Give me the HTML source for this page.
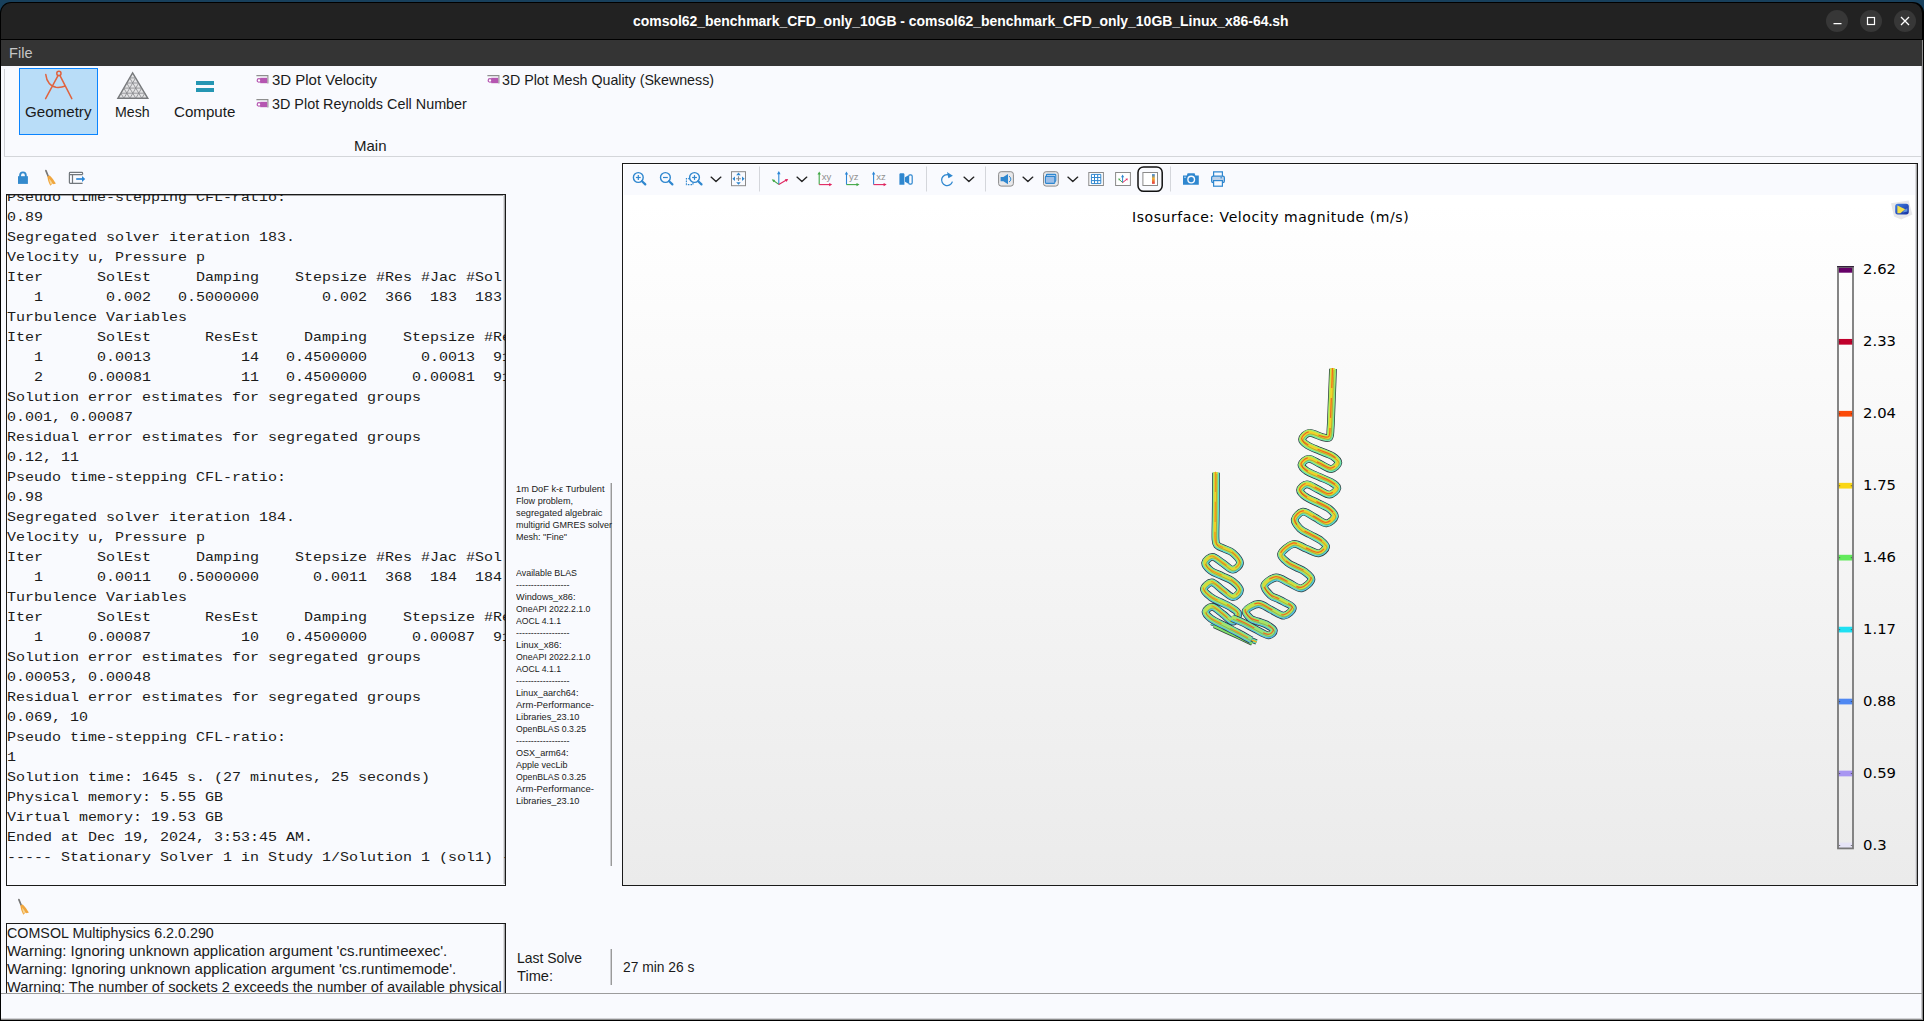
<!DOCTYPE html>
<html lang="en"><head><meta charset="utf-8"><title>comsol62_benchmark_CFD_only_10GB</title>
<style>
html,body{margin:0;padding:0}
body{width:1924px;height:1021px;overflow:hidden;background:#18405c;position:relative;font-family:"Liberation Sans",sans-serif}
.abs{position:absolute}
.t{position:absolute;white-space:pre;transform-origin:0 0;line-height:normal}
#win{position:absolute;left:0;top:2px;width:1924px;height:1019px;background:#000;border-radius:11px 11px 0 0;overflow:hidden}
#titlebar{position:absolute;left:1px;top:1px;width:1921px;height:36px;background:#222222;border-radius:10px 10px 0 0}
#menubar{position:absolute;left:1px;top:38px;width:1921px;height:26px;background:#343434}
#app{position:absolute;left:1px;top:64px;width:1920px;height:952px;background:#f9fafe;border-right:1px solid #c9c9cd;border-bottom:1px solid #d2d2d6}
#win:after{content:'';position:absolute;left:1px;top:38px;width:1921px;height:979px;border-right:1px solid #8c8c8c;border-bottom:1px solid #8c8c8c;pointer-events:none}
.wbtn{position:absolute;top:7px;width:22px;height:22px;border-radius:11px;background:#373737}
#log{position:absolute;left:6px;top:194px;width:498px;height:690px;border:1px solid #1a1a1a;box-sizing:content-box;overflow:hidden;background:#f9fafe}
#log pre{margin:0;position:absolute;left:0px;top:-7.5px;font-family:"Liberation Mono",monospace;font-size:12.8px;transform:scaleX(1.1717);transform-origin:0 0;line-height:20px;color:#1a1a1a;white-space:pre}
#log2{position:absolute;left:6px;top:923px;width:498px;height:69px;border:1px solid #1a1a1a;border-bottom:none;overflow:hidden;background:#f9fafe}
.vline{position:absolute;width:2px;background:linear-gradient(90deg,#cdced2 0,#cdced2 50%,#9a9a9a 50%,#9a9a9a 100%)}
.hline{position:absolute;height:1px;background:#d4d6da}
#gfx{position:absolute;left:622px;top:163px;width:1294px;height:721px;border:1px solid #1a1a1a;background:linear-gradient(#ffffff 0px,#ffffff 40px,#ebebeb 100%)}
#gtb{position:absolute;left:1px;top:1px;width:1291px;height:30px;background:#f9fafe}
.sep{position:absolute;top:4px;width:1px;height:25px;background:#d9dbe0}
</style></head><body>
<div id="win">
<div id="titlebar">
 <div class="wbtn" style="left:1825px"><svg width="22" height="22"><path d="M7.5 13.6h8" stroke="#fff" stroke-width="1.2" fill="none"/></svg></div>
 <div class="wbtn" style="left:1859px"><svg width="22" height="22"><rect x="7.5" y="7.5" width="7" height="7" stroke="#fff" stroke-width="1.2" fill="none"/></svg></div>
 <div class="wbtn" style="left:1893px"><svg width="22" height="22"><path d="M7 7l8 8M15 7l-8 8" stroke="#fff" stroke-width="1.3" fill="none"/></svg></div>
</div>
<div id="menubar"></div>
<div id="app"></div>
</div>

<div id="page" class="abs" style="left:0;top:0;width:1924px;height:1021px">
<div class="abs" style="left:4px;top:69px;height:88px;width:1px;background:#cfd1d6"></div>
<div class="hline" style="left:4px;top:156px;width:1917px"></div>
<div class="abs" style="left:19px;top:68px;width:77px;height:65px;border:1px solid #0a84ff;background:#b9ddf8"></div>
<svg class="abs" style="left:40px;top:68px" width="40" height="34" viewBox="40 68 40 34" fill="none" stroke="#e0633f" stroke-width="1.5" stroke-linecap="round">
<circle cx="58.9" cy="73.4" r="2.1"/><path d="M58 75.6L45.6 98.6M60 75.6L71.8 98.6M45.8 74.6C46.5 82 51 86.8 56 87.3C60 87.6 63 87 65.2 86"/></svg>
<svg class="abs" style="left:114px;top:70px" width="38" height="32" viewBox="114 70 38 32"><path d="M132.6 72.8L147.8 98.3H117.9Z" fill="#e2e2e4" stroke="#77797c" stroke-width="1.4" stroke-linejoin="miter"/><g stroke="#85878a" stroke-width="0.8" fill="none"><path d="M129.7 77.9H135.6"/><path d="M123.9 98.3L135.6 77.9"/><path d="M123.9 98.3L120.8 93.2"/><path d="M126.7 83.0H138.7"/><path d="M129.9 98.3L138.7 83.0"/><path d="M129.9 98.3L123.8 88.1"/><path d="M123.8 88.1H141.7"/><path d="M135.8 98.3L141.7 88.1"/><path d="M135.8 98.3L126.7 83.0"/><path d="M120.8 93.2H144.8"/><path d="M141.8 98.3L144.8 93.2"/><path d="M141.8 98.3L129.7 77.9"/></g></svg>
<div class="abs" style="left:196px;top:81px;width:18px;height:4px;background:#2596b3"></div><div class="abs" style="left:196px;top:88px;width:18px;height:4px;background:#2596b3"></div>
<svg class="abs" style="left:256px;top:75px" width="13" height="10" viewBox="0 0 13 10"><path d="M0.4 0.6H11.9V8.6" stroke="#8e8e8e" stroke-width="1.1" fill="none"/><path d="M4.2 2.8H11.2V8.2H4.2Z" fill="#b556b1"/><circle cx="3" cy="5.4" r="1.8" fill="#fff" stroke="#b556b1" stroke-width="1.2"/></svg>
<svg class="abs" style="left:256px;top:99px" width="13" height="10" viewBox="0 0 13 10"><path d="M0.4 0.6H11.9V8.6" stroke="#8e8e8e" stroke-width="1.1" fill="none"/><path d="M4.2 2.8H11.2V8.2H4.2Z" fill="#b556b1"/><circle cx="3" cy="5.4" r="1.8" fill="#fff" stroke="#b556b1" stroke-width="1.2"/></svg>
<svg class="abs" style="left:487px;top:75px" width="13" height="10" viewBox="0 0 13 10"><path d="M0.4 0.6H11.9V8.6" stroke="#8e8e8e" stroke-width="1.1" fill="none"/><path d="M4.2 2.8H11.2V8.2H4.2Z" fill="#b556b1"/><circle cx="3" cy="5.4" r="1.8" fill="#fff" stroke="#b556b1" stroke-width="1.2"/></svg>
<svg class="abs" style="left:14px;top:168px" width="18" height="20" viewBox="14 168 18 20"><path d="M20.1 177V175.2a2.85 2.85 0 0 1 5.7 0V177" fill="none" stroke="#348acd" stroke-width="1.9"/><rect x="18" y="176.2" width="9.9" height="7.7" fill="#348acd"/></svg>
<svg class="abs" style="left:42px;top:168px" width="18" height="20" viewBox="42 168 18 20"><path d="M45.9 170.6L48.2 176.2" stroke="#777" stroke-width="1.7" stroke-linecap="round"/><path d="M47.3 176.2L49.8 175.4C52.4 178 54.4 181 55.9 183.6L53.6 184.2L52.6 183.4L50.3 185.8C49.2 183.6 48.3 181.4 47.9 179.6Z" fill="#f0a63e"/><path d="M49 178.4C50.6 180 51.8 181.8 52.4 183.2L50.6 184.6C49.8 182.6 49.2 180.4 49 178.4Z" fill="#f8d694"/></svg>
<svg class="abs" style="left:66px;top:168px" width="22" height="20" viewBox="66 168 22 20" fill="none"><path d="M82.6 174.6V173.2Q82.6 172.4 81.8 172.4H70.2Q69.4 172.4 69.4 173.2V182.6Q69.4 183.4 70.2 183.4H82.6" stroke="#72777c" stroke-width="1.2"/><path d="M69.4 174.7H82.6M72.5 174.7V183.4" stroke="#72777c" stroke-width="1.2"/><path d="M76.2 179H82.6" stroke="#2b86d6" stroke-width="1.7"/><path d="M82 176.1L85.2 179L82 181.9Z" fill="#2b86d6"/></svg>
<svg class="abs" style="left:15px;top:897px" width="18" height="20" viewBox="42 168 18 20"><path d="M45.9 170.6L48.2 176.2" stroke="#777" stroke-width="1.7" stroke-linecap="round"/><path d="M47.3 176.2L49.8 175.4C52.4 178 54.4 181 55.9 183.6L53.6 184.2L52.6 183.4L50.3 185.8C49.2 183.6 48.3 181.4 47.9 179.6Z" fill="#f0a63e"/><path d="M49 178.4C50.6 180 51.8 181.8 52.4 183.2L50.6 184.6C49.8 182.6 49.2 180.4 49 178.4Z" fill="#f8d694"/></svg>
<div id="log"><div class="abs" style="left:0;top:0;width:498px;height:1px;background:#a0a0a2"></div><div class="abs" style="left:496px;top:0;width:2px;height:689px;background:linear-gradient(90deg,#dcdce0 0,#dcdce0 50%,#a6a6a8 50%,#a6a6a8 100%)"></div><pre>Pseudo time-stepping CFL-ratio:
0.89
Segregated solver iteration 183.
Velocity u, Pressure p
Iter      SolEst     Damping    Stepsize #Res #Jac #Sol
   1       0.002   0.5000000       0.002  366  183  183
Turbulence Variables
Iter      SolEst      ResEst     Damping    Stepsize #Res #Jac #Sol
   1      0.0013          14   0.4500000      0.0013  919  183  183
   2     0.00081          11   0.4500000     0.00081  910  183  183
Solution error estimates for segregated groups
0.001, 0.00087
Residual error estimates for segregated groups
0.12, 11
Pseudo time-stepping CFL-ratio:
0.98
Segregated solver iteration 184.
Velocity u, Pressure p
Iter      SolEst     Damping    Stepsize #Res #Jac #Sol
   1      0.0011   0.5000000      0.0011  368  184  184
Turbulence Variables
Iter      SolEst      ResEst     Damping    Stepsize #Res #Jac #Sol
   1     0.00087          10   0.4500000     0.00087  911  184  184
Solution error estimates for segregated groups
0.00053, 0.00048
Residual error estimates for segregated groups
0.069, 10
Pseudo time-stepping CFL-ratio:
1
Solution time: 1645 s. (27 minutes, 25 seconds)
Physical memory: 5.55 GB
Virtual memory: 19.53 GB
Ended at Dec 19, 2024, 3:53:45 AM.
----- Stationary Solver 1 in Study 1/Solution 1 (sol1) ------------------------</pre></div>
<div id="log2"></div>
<div class="abs" style="left:503px;top:924px;width:2px;height:69px;background:linear-gradient(90deg,#dcdce0 0,#dcdce0 50%,#a6a6a8 50%,#a6a6a8 100%)"></div>
<div class="vline" style="left:610px;top:483px;height:383px"></div>
<div class="vline" style="left:610px;top:949px;height:36px"></div>
<div id="gfx"><div id="gtb"></div></div>
<div class="abs" style="left:1915px;top:164px;width:2px;height:720px;background:linear-gradient(90deg,#dcdce0 0,#dcdce0 50%,#a6a6a8 50%,#a6a6a8 100%)"></div>
<svg class="abs" style="left:620px;top:160px" width="620" height="40" viewBox="620 160 620 40" fill="none">
<circle cx="638.3" cy="177.5" r="4.9" stroke="#2f87cf" stroke-width="1.4"/><path d="M642.0 181.2L645.3 184.4" stroke="#2f87cf" stroke-width="2.2" stroke-linecap="round"/>
<path d="M635.9 177.5H640.6999999999999" stroke="#2f87cf" stroke-width="1.2"/>
<path d="M638.3 175.1V179.9" stroke="#2f87cf" stroke-width="1.2"/>
<circle cx="665.4" cy="177.5" r="4.9" stroke="#2f87cf" stroke-width="1.4"/><path d="M669.1 181.2L672.4 184.4" stroke="#2f87cf" stroke-width="2.2" stroke-linecap="round"/>
<path d="M663.0 177.5H667.8" stroke="#2f87cf" stroke-width="1.2"/>
<circle cx="694.5" cy="177.5" r="4.9" stroke="#2f87cf" stroke-width="1.4"/><path d="M698.2 181.2L701.5 184.4" stroke="#2f87cf" stroke-width="2.2" stroke-linecap="round"/>
<path d="M692.1 177.5H696.9" stroke="#2f87cf" stroke-width="1.2"/>
<path d="M694.5 175.1V179.9" stroke="#2f87cf" stroke-width="1.2"/>
<path d="M689.8 178.6H686.4V184.6H693V182.6" stroke="#2f87cf" stroke-width="1.1" stroke-dasharray="1.6 1.1"/>
<path d="M711.1 177.1L716 181.6L720.9 177.1" stroke="#222" stroke-width="1.35" stroke-linecap="round" stroke-linejoin="round"/>
<rect x="731.5" y="171.7" width="14" height="14" stroke="#8a8a8a" stroke-width="1"/>
<path d="M738.5 176.3V181.1M736.1 178.7H740.9" stroke="#8a8a8a" stroke-width="1.1"/>
<path d="M738.5 172.6L740.8 175.2H736.2ZM738.5 184.8L740.8 182.2H736.2ZM732.4 178.7L735 176.4V181ZM744.6 178.7L742 176.4V181Z" fill="#2f87cf"/>
<path d="M759.5 166.5V191.5" stroke="#d4d6db" stroke-width="1"/>
<path d="M778.8 184.4V172.4" stroke="#2b86d6" stroke-width="1.1"/><path d="M778.8 171L780.6 174.2H777Z" fill="#2b86d6"/>
<path d="M778.8 184.4L773 180.2" stroke="#42a847" stroke-width="1.1"/><path d="M771.8 179.3L775.2 180L773.4 182.2Z" fill="#42a847"/>
<path d="M778.8 184.4L786.8 179.8" stroke="#e0245e" stroke-width="1.1"/><path d="M788.2 179L786.6 182L784.8 179.2Z" fill="#e0245e"/>
<path d="M797.0 177.1L801.9 181.6L806.8 177.1" stroke="#222" stroke-width="1.35" stroke-linecap="round" stroke-linejoin="round"/>
<path d="M819.2 184.6V173" stroke="#42a847" stroke-width="1.1"/><path d="M819.2 171.4L820.9000000000001 174.4H817.5Z" fill="#42a847"/>
<path d="M819.2 184.6H830.6" stroke="#e0245e" stroke-width="1.1"/><path d="M832.2 184.6L829.2 186.3V182.9Z" fill="#e0245e"/>
<text x="821.8000000000001" y="180.4" font-family="'Liberation Sans',sans-serif" font-size="9.5" fill="#8f8f8f">xy</text>
<path d="M846.5 184.6V173" stroke="#2b86d6" stroke-width="1.1"/><path d="M846.5 171.4L848.2 174.4H844.8Z" fill="#2b86d6"/>
<path d="M846.5 184.6H857.9" stroke="#42a847" stroke-width="1.1"/><path d="M859.5 184.6L856.5 186.3V182.9Z" fill="#42a847"/>
<text x="849.1" y="180.4" font-family="'Liberation Sans',sans-serif" font-size="9.5" fill="#8f8f8f">yz</text>
<path d="M873.6 184.6V173" stroke="#2b86d6" stroke-width="1.1"/><path d="M873.6 171.4L875.3000000000001 174.4H871.9Z" fill="#2b86d6"/>
<path d="M873.6 184.6H885.0" stroke="#e0245e" stroke-width="1.1"/><path d="M886.6 184.6L883.6 186.3V182.9Z" fill="#e0245e"/>
<text x="876.2" y="180.4" font-family="'Liberation Sans',sans-serif" font-size="9.5" fill="#8f8f8f">xz</text>
<path d="M899.4 174.6C899.4 173.6 900 173.2 900.8 173.2H903C903.8 173.2 904.4 173.6 904.4 174.6V184.8H899.4Z" fill="#2f87cf"/>
<path d="M905 177.2L908 175.6V183.4L905 181.8Z" fill="#2f87cf"/><rect x="908.6" y="174.8" width="3.6" height="9.4" rx="1.4" stroke="#2f87cf" stroke-width="1.2"/>
<path d="M926.5 166.5V191.5" stroke="#d4d6db" stroke-width="1"/>
<path d="M949 174.9A5.5 5.5 0 1 0 952.4 181.6" stroke="#2f87cf" stroke-width="1.3"/><path d="M947 171.9L952.9 175.7L948.4 178.2Z" fill="#2f87cf"/>
<path d="M964.0 177.1L968.9 181.6L973.8 177.1" stroke="#222" stroke-width="1.35" stroke-linecap="round" stroke-linejoin="round"/>
<path d="M985.5 166.5V191.5" stroke="#d4d6db" stroke-width="1"/>
<rect x="998.6" y="171.7" width="14.8" height="14.4" rx="2.6" fill="#e8e8ea" stroke="#8a8a8a" stroke-width="1"/>
<path d="M1000.6 177H1003.4L1008 174V184.2L1003.4 181.2H1000.6Z" fill="#2f87cf"/><path d="M1009 176.2A3.2 3.2 0 0 1 1009 182" stroke="#2f87cf" stroke-width="1"/>
<path d="M1023.0000000000001 177.1L1027.9 181.6L1032.8000000000002 177.1" stroke="#222" stroke-width="1.35" stroke-linecap="round" stroke-linejoin="round"/>
<rect x="1043.5" y="171.7" width="14.8" height="14.4" rx="2.6" fill="#e8e8ea" stroke="#8a8a8a" stroke-width="1"/>
<rect x="1046.4" y="174.4" width="9.4" height="7" rx="0.8" stroke="#2f87cf" stroke-width="1.1" fill="#cfe0f5"/><rect x="1045.4" y="176.4" width="9.4" height="7" rx="0.8" stroke="#2f87cf" stroke-width="1.1" fill="#9dbfe8"/>
<path d="M1067.8999999999999 177.1L1072.8 181.6L1077.7 177.1" stroke="#222" stroke-width="1.35" stroke-linecap="round" stroke-linejoin="round"/>
<rect x="1088.8" y="172.5" width="14.6" height="13" stroke="#8a8a8a" stroke-width="1" fill="#fff"/>
<path d="M1091.4 174.4H1100.8V183.6H1091.4ZM1094.5 174.4V183.6M1097.7 174.4V183.6M1091.4 177.5H1100.8M1091.4 180.6H1100.8" stroke="#2f87cf" stroke-width="1"/>
<rect x="1115.6" y="172.5" width="14.8" height="13" stroke="#8a8a8a" stroke-width="1" fill="#fff"/>
<path d="M1122.6 182.6V176.4" stroke="#2f87cf" stroke-width="1"/><path d="M1122.6 174.6L1124.2 177.2H1121Z" fill="#2f87cf"/><path d="M1122.6 182.6L1119.2 179.4" stroke="#42a847" stroke-width="1"/><path d="M1118.2 178.4L1120.6 178.8L1119 180.8Z" fill="#42a847"/><path d="M1122.6 182.6L1126.6 179.4" stroke="#e0245e" stroke-width="1"/><path d="M1127.8 178.4L1127.2 180.8L1125.4 178.8Z" fill="#e0245e"/>
<rect x="1138" y="166.9" width="24.2" height="24.4" rx="5.6" stroke="#111" stroke-width="1.5" fill="#f9fafe"/>
<rect x="1142.9" y="172.5" width="14.6" height="13" stroke="#8a8a8a" stroke-width="1" fill="#fff"/>
<defs><linearGradient id="lg" x1="0" y1="0" x2="0" y2="1"><stop offset="0" stop-color="#2b7fd6"/><stop offset=".45" stop-color="#f2b035"/><stop offset="1" stop-color="#e2343f"/></linearGradient></defs>
<rect x="1152" y="174.2" width="2.8" height="9.6" fill="url(#lg)"/>
<path d="M1170.5 166.5V191.5" stroke="#d4d6db" stroke-width="1"/>
<path d="M1183 175.4H1186.8L1187.6 173.2H1194.6L1195.4 175.4H1198.8V184.8H1183Z" fill="#2f87cf"/><circle cx="1191.2" cy="179.6" r="3.3" fill="#2f87cf" stroke="#f9fafe" stroke-width="1.4"/><circle cx="1185" cy="177.2" r=".7" fill="#f9fafe"/>
<path d="M1213.6 176.4V171.8H1222.4V176.4" stroke="#2f87cf" stroke-width="1.2"/><rect x="1211.6" y="176.2" width="12.8" height="6.4" rx="1.6" fill="#bdd2ea" stroke="#2f87cf" stroke-width="1.2"/><rect x="1213.6" y="180.6" width="8.8" height="5.6" fill="#f9fafe" stroke="#2f87cf" stroke-width="1.2"/><path d="M1220.4 177.8H1222" stroke="#2f87cf" stroke-width="1"/>
</svg>
<svg class="abs" style="left:1180px;top:355px" width="180" height="300" viewBox="1180 355 180 300" fill="none" stroke-linecap="butt" stroke-linejoin="round">
<defs><linearGradient id="sg" gradientUnits="userSpaceOnUse" x1="0" y1="370" x2="0" y2="645"><stop offset="0" stop-color="#8fe672"/><stop offset=".45" stop-color="#5fe2cc"/><stop offset="1" stop-color="#52b6ea"/></linearGradient><linearGradient id="yg" gradientUnits="userSpaceOnUse" x1="0" y1="370" x2="0" y2="645"><stop offset="0" stop-color="#f4d428"/><stop offset=".6" stop-color="#f2cc26"/><stop offset=".85" stop-color="#cfe040"/><stop offset="1" stop-color="#86e088"/></linearGradient><linearGradient id="tg" gradientUnits="userSpaceOnUse" x1="0" y1="370" x2="0" y2="645"><stop offset="0" stop-color="#c6ea48"/><stop offset="1" stop-color="#8fe67a"/></linearGradient></defs>
<g id="sp">
<path d="M1211.5,622.6C1215.4,624.3 1227.5,629.8 1235.0,633.0C1242.5,636.2 1252.9,640.5 1256.5,642.0" stroke="#34423f" stroke-width="5.4"/><path d="M1211.5,622.6C1215.4,624.3 1227.5,629.8 1235.0,633.0C1242.5,636.2 1252.9,640.5 1256.5,642.0" stroke="#52dcc0" stroke-width="4"/><path d="M1211.5,622.6C1215.4,624.3 1227.5,629.8 1235.0,633.0C1242.5,636.2 1252.9,640.5 1256.5,642.0" stroke="#f2b21d" stroke-width="1.6"/>
<path d="M1214.0,626.0C1217.7,627.7 1229.7,633.1 1236.0,636.0C1242.3,638.9 1249.3,642.2 1252.0,643.5" stroke="#34423f" stroke-width="4.4"/><path d="M1214.0,626.0C1217.7,627.7 1229.7,633.1 1236.0,636.0C1242.3,638.9 1249.3,642.2 1252.0,643.5" stroke="#7fe06a" stroke-width="3"/>
<path d="M1216.0,472.7C1216.0,476.4 1216.0,487.1 1215.9,495.0C1215.9,502.9 1215.8,512.8 1215.7,520.0C1215.6,527.2 1215.3,533.8 1215.5,538.0C1215.7,542.2 1215.5,543.2 1217.0,545.0C1218.5,546.8 1222.1,547.7 1224.8,549.0C1227.4,550.3 1230.4,550.7 1232.9,553.0C1235.5,555.3 1240.0,560.0 1240.0,562.8C1240.0,565.6 1235.8,569.6 1232.9,569.7C1230.1,569.8 1226.3,565.4 1223.0,563.3C1219.6,561.2 1215.6,557.0 1212.6,556.9C1209.6,556.8 1205.5,560.5 1205.2,562.8C1204.9,565.1 1208.1,568.5 1210.9,570.7C1213.7,572.9 1218.4,574.2 1222.0,576.0C1225.7,577.8 1230.0,579.0 1232.9,581.4C1235.9,583.8 1240.0,587.6 1240.0,590.2C1240.0,592.8 1235.9,597.2 1232.9,597.1C1230.0,597.0 1225.6,592.2 1222.0,589.7C1218.5,587.2 1214.8,582.5 1211.8,582.4C1208.8,582.3 1204.0,586.8 1203.9,589.3C1203.7,591.8 1208.2,595.0 1210.9,597.1C1213.6,599.2 1217.0,600.4 1220.2,602.0C1223.5,603.6 1227.3,604.9 1230.2,606.9C1233.2,608.9 1237.7,611.2 1238.2,613.7C1238.6,616.2 1235.5,621.5 1232.9,621.6C1230.4,621.7 1226.3,616.7 1223.0,614.2C1219.6,611.8 1215.5,607.3 1212.6,606.9C1209.7,606.5 1205.9,609.8 1205.6,611.8C1205.3,613.8 1207.7,616.2 1210.9,618.6C1214.1,621.0 1220.2,623.6 1224.8,626.0C1229.3,628.4 1233.8,630.6 1238.2,633.0C1242.7,635.4 1249.2,639.0 1251.4,640.2" stroke="#2f3b3b" stroke-width="7.8"/><path d="M1216.0,472.7C1216.0,476.4 1216.0,487.1 1215.9,495.0C1215.9,502.9 1215.8,512.8 1215.7,520.0C1215.6,527.2 1215.3,533.8 1215.5,538.0C1215.7,542.2 1215.5,543.2 1217.0,545.0C1218.5,546.8 1222.1,547.7 1224.8,549.0C1227.4,550.3 1230.4,550.7 1232.9,553.0C1235.5,555.3 1240.0,560.0 1240.0,562.8C1240.0,565.6 1235.8,569.6 1232.9,569.7C1230.1,569.8 1226.3,565.4 1223.0,563.3C1219.6,561.2 1215.6,557.0 1212.6,556.9C1209.6,556.8 1205.5,560.5 1205.2,562.8C1204.9,565.1 1208.1,568.5 1210.9,570.7C1213.7,572.9 1218.4,574.2 1222.0,576.0C1225.7,577.8 1230.0,579.0 1232.9,581.4C1235.9,583.8 1240.0,587.6 1240.0,590.2C1240.0,592.8 1235.9,597.2 1232.9,597.1C1230.0,597.0 1225.6,592.2 1222.0,589.7C1218.5,587.2 1214.8,582.5 1211.8,582.4C1208.8,582.3 1204.0,586.8 1203.9,589.3C1203.7,591.8 1208.2,595.0 1210.9,597.1C1213.6,599.2 1217.0,600.4 1220.2,602.0C1223.5,603.6 1227.3,604.9 1230.2,606.9C1233.2,608.9 1237.7,611.2 1238.2,613.7C1238.6,616.2 1235.5,621.5 1232.9,621.6C1230.4,621.7 1226.3,616.7 1223.0,614.2C1219.6,611.8 1215.5,607.3 1212.6,606.9C1209.7,606.5 1205.9,609.8 1205.6,611.8C1205.3,613.8 1207.7,616.2 1210.9,618.6C1214.1,621.0 1220.2,623.6 1224.8,626.0C1229.3,628.4 1233.8,630.6 1238.2,633.0C1242.7,635.4 1249.2,639.0 1251.4,640.2" stroke="url(#sg)" stroke-width="6.4"/><path d="M1216.0,472.7C1216.0,476.4 1216.0,487.1 1215.9,495.0C1215.9,502.9 1215.8,512.8 1215.7,520.0C1215.6,527.2 1215.3,533.8 1215.5,538.0C1215.7,542.2 1215.5,543.2 1217.0,545.0C1218.5,546.8 1222.1,547.7 1224.8,549.0C1227.4,550.3 1230.4,550.7 1232.9,553.0C1235.5,555.3 1240.0,560.0 1240.0,562.8C1240.0,565.6 1235.8,569.6 1232.9,569.7C1230.1,569.8 1226.3,565.4 1223.0,563.3C1219.6,561.2 1215.6,557.0 1212.6,556.9C1209.6,556.8 1205.5,560.5 1205.2,562.8C1204.9,565.1 1208.1,568.5 1210.9,570.7C1213.7,572.9 1218.4,574.2 1222.0,576.0C1225.7,577.8 1230.0,579.0 1232.9,581.4C1235.9,583.8 1240.0,587.6 1240.0,590.2C1240.0,592.8 1235.9,597.2 1232.9,597.1C1230.0,597.0 1225.6,592.2 1222.0,589.7C1218.5,587.2 1214.8,582.5 1211.8,582.4C1208.8,582.3 1204.0,586.8 1203.9,589.3C1203.7,591.8 1208.2,595.0 1210.9,597.1C1213.6,599.2 1217.0,600.4 1220.2,602.0C1223.5,603.6 1227.3,604.9 1230.2,606.9C1233.2,608.9 1237.7,611.2 1238.2,613.7C1238.6,616.2 1235.5,621.5 1232.9,621.6C1230.4,621.7 1226.3,616.7 1223.0,614.2C1219.6,611.8 1215.5,607.3 1212.6,606.9C1209.7,606.5 1205.9,609.8 1205.6,611.8C1205.3,613.8 1207.7,616.2 1210.9,618.6C1214.1,621.0 1220.2,623.6 1224.8,626.0C1229.3,628.4 1233.8,630.6 1238.2,633.0C1242.7,635.4 1249.2,639.0 1251.4,640.2" stroke="url(#tg)" stroke-width="4.8" transform="translate(-0.4,-0.6)"/><path d="M1216.0,472.7C1216.0,476.4 1216.0,487.1 1215.9,495.0C1215.9,502.9 1215.8,512.8 1215.7,520.0C1215.6,527.2 1215.3,533.8 1215.5,538.0C1215.7,542.2 1215.5,543.2 1217.0,545.0C1218.5,546.8 1222.1,547.7 1224.8,549.0C1227.4,550.3 1230.4,550.7 1232.9,553.0C1235.5,555.3 1240.0,560.0 1240.0,562.8C1240.0,565.6 1235.8,569.6 1232.9,569.7C1230.1,569.8 1226.3,565.4 1223.0,563.3C1219.6,561.2 1215.6,557.0 1212.6,556.9C1209.6,556.8 1205.5,560.5 1205.2,562.8C1204.9,565.1 1208.1,568.5 1210.9,570.7C1213.7,572.9 1218.4,574.2 1222.0,576.0C1225.7,577.8 1230.0,579.0 1232.9,581.4C1235.9,583.8 1240.0,587.6 1240.0,590.2C1240.0,592.8 1235.9,597.2 1232.9,597.1C1230.0,597.0 1225.6,592.2 1222.0,589.7C1218.5,587.2 1214.8,582.5 1211.8,582.4C1208.8,582.3 1204.0,586.8 1203.9,589.3C1203.7,591.8 1208.2,595.0 1210.9,597.1C1213.6,599.2 1217.0,600.4 1220.2,602.0C1223.5,603.6 1227.3,604.9 1230.2,606.9C1233.2,608.9 1237.7,611.2 1238.2,613.7C1238.6,616.2 1235.5,621.5 1232.9,621.6C1230.4,621.7 1226.3,616.7 1223.0,614.2C1219.6,611.8 1215.5,607.3 1212.6,606.9C1209.7,606.5 1205.9,609.8 1205.6,611.8C1205.3,613.8 1207.7,616.2 1210.9,618.6C1214.1,621.0 1220.2,623.6 1224.8,626.0C1229.3,628.4 1233.8,630.6 1238.2,633.0C1242.7,635.4 1249.2,639.0 1251.4,640.2" stroke="url(#yg)" stroke-width="2.8" transform="translate(-0.3,-0.5)"/><path d="M1216.0,472.7C1216.0,476.4 1216.0,487.1 1215.9,495.0C1215.9,502.9 1215.8,512.8 1215.7,520.0C1215.6,527.2 1215.3,533.8 1215.5,538.0C1215.7,542.2 1215.5,543.2 1217.0,545.0C1218.5,546.8 1222.1,547.7 1224.8,549.0C1227.4,550.3 1230.4,550.7 1232.9,553.0C1235.5,555.3 1240.0,560.0 1240.0,562.8C1240.0,565.6 1235.8,569.6 1232.9,569.7C1230.1,569.8 1226.3,565.4 1223.0,563.3C1219.6,561.2 1215.6,557.0 1212.6,556.9C1209.6,556.8 1205.5,560.5 1205.2,562.8C1204.9,565.1 1208.1,568.5 1210.9,570.7C1213.7,572.9 1218.4,574.2 1222.0,576.0C1225.7,577.8 1230.0,579.0 1232.9,581.4C1235.9,583.8 1240.0,587.6 1240.0,590.2C1240.0,592.8 1235.9,597.2 1232.9,597.1C1230.0,597.0 1225.6,592.2 1222.0,589.7C1218.5,587.2 1214.8,582.5 1211.8,582.4C1208.8,582.3 1204.0,586.8 1203.9,589.3C1203.7,591.8 1208.2,595.0 1210.9,597.1C1213.6,599.2 1217.0,600.4 1220.2,602.0C1223.5,603.6 1227.3,604.9 1230.2,606.9C1233.2,608.9 1237.7,611.2 1238.2,613.7C1238.6,616.2 1235.5,621.5 1232.9,621.6C1230.4,621.7 1226.3,616.7 1223.0,614.2C1219.6,611.8 1215.5,607.3 1212.6,606.9C1209.7,606.5 1205.9,609.8 1205.6,611.8C1205.3,613.8 1207.7,616.2 1210.9,618.6C1214.1,621.0 1220.2,623.6 1224.8,626.0C1229.3,628.4 1233.8,630.6 1238.2,633.0C1242.7,635.4 1249.2,639.0 1251.4,640.2" stroke="#f0961c" stroke-width="1.2" transform="translate(-0.5,-0.9)" stroke-dasharray="20 10"/><path d="M1216.0,472.7C1216.0,476.4 1216.0,487.1 1215.9,495.0C1215.9,502.9 1215.8,512.8 1215.7,520.0C1215.6,527.2 1215.3,533.8 1215.5,538.0C1215.7,542.2 1215.5,543.2 1217.0,545.0C1218.5,546.8 1222.1,547.7 1224.8,549.0C1227.4,550.3 1230.4,550.7 1232.9,553.0C1235.5,555.3 1240.0,560.0 1240.0,562.8C1240.0,565.6 1235.8,569.6 1232.9,569.7C1230.1,569.8 1226.3,565.4 1223.0,563.3C1219.6,561.2 1215.6,557.0 1212.6,556.9C1209.6,556.8 1205.5,560.5 1205.2,562.8C1204.9,565.1 1208.1,568.5 1210.9,570.7C1213.7,572.9 1218.4,574.2 1222.0,576.0C1225.7,577.8 1230.0,579.0 1232.9,581.4C1235.9,583.8 1240.0,587.6 1240.0,590.2C1240.0,592.8 1235.9,597.2 1232.9,597.1C1230.0,597.0 1225.6,592.2 1222.0,589.7C1218.5,587.2 1214.8,582.5 1211.8,582.4C1208.8,582.3 1204.0,586.8 1203.9,589.3C1203.7,591.8 1208.2,595.0 1210.9,597.1C1213.6,599.2 1217.0,600.4 1220.2,602.0C1223.5,603.6 1227.3,604.9 1230.2,606.9C1233.2,608.9 1237.7,611.2 1238.2,613.7C1238.6,616.2 1235.5,621.5 1232.9,621.6C1230.4,621.7 1226.3,616.7 1223.0,614.2C1219.6,611.8 1215.5,607.3 1212.6,606.9C1209.7,606.5 1205.9,609.8 1205.6,611.8C1205.3,613.8 1207.7,616.2 1210.9,618.6C1214.1,621.0 1220.2,623.6 1224.8,626.0C1229.3,628.4 1233.8,630.6 1238.2,633.0C1242.7,635.4 1249.2,639.0 1251.4,640.2" stroke="#2f3b3b" stroke-width="0.5" opacity=".55" transform="translate(0.9,1.2)"/>
<path d="M1333.0,368.8C1332.9,372.3 1332.5,383.1 1332.2,390.0C1331.9,396.9 1331.7,403.7 1331.4,410.0C1331.1,416.3 1331.0,423.4 1330.6,428.0C1330.2,432.6 1330.6,436.0 1329.2,437.5C1327.8,439.0 1325.3,437.8 1322.0,437.0C1318.7,436.2 1312.6,432.4 1309.3,432.8C1306.0,433.2 1302.3,437.2 1302.1,439.3C1301.9,441.4 1304.9,443.6 1307.9,445.5C1310.9,447.4 1315.8,449.1 1320.0,450.9C1324.2,452.7 1329.8,454.3 1332.8,456.3C1335.8,458.3 1338.5,460.6 1338.3,462.7C1338.1,464.8 1334.5,468.8 1331.4,469.0C1328.4,469.2 1323.8,465.6 1320.0,463.9C1316.2,462.2 1312.0,458.7 1308.9,458.8C1305.8,458.9 1301.8,462.6 1301.5,464.7C1301.2,466.8 1304.1,469.2 1307.0,471.2C1309.9,473.2 1314.9,474.8 1319.0,476.7C1323.1,478.6 1328.4,480.4 1331.4,482.3C1334.5,484.2 1337.6,486.1 1337.3,488.2C1337.0,490.2 1332.7,494.4 1329.5,494.6C1326.3,494.8 1321.8,491.1 1318.0,489.4C1314.2,487.7 1310.0,484.2 1307.0,484.3C1304.0,484.4 1300.3,488.0 1300.1,490.1C1299.9,492.2 1303.0,494.9 1306.0,497.0C1309.0,499.1 1314.1,501.0 1318.0,503.0C1321.9,505.0 1326.7,506.8 1329.5,509.1C1332.3,511.4 1335.3,514.2 1334.8,516.6C1334.3,519.0 1329.8,523.2 1326.5,523.4C1323.2,523.5 1318.9,519.5 1315.0,517.5C1311.1,515.5 1306.5,511.4 1303.1,511.7C1299.7,512.0 1295.3,516.7 1294.8,519.5C1294.3,522.3 1297.6,526.2 1300.1,528.7C1302.6,531.2 1306.6,532.5 1310.0,534.5C1313.4,536.5 1318.0,538.3 1320.7,540.4C1323.4,542.5 1326.4,544.8 1326.1,546.9C1325.8,549.0 1322.0,553.0 1318.7,553.3C1315.4,553.6 1310.2,550.1 1306.0,548.6C1301.8,547.1 1297.5,543.1 1293.3,544.0C1289.1,544.9 1282.0,550.9 1281.1,554.0C1280.2,557.1 1285.4,560.6 1287.9,562.8C1290.4,565.0 1293.2,565.7 1296.0,567.2C1298.8,568.7 1302.0,569.6 1304.6,571.6C1307.2,573.6 1311.9,576.7 1311.4,579.5C1310.9,582.3 1305.3,587.7 1301.6,588.3C1297.9,588.9 1293.2,584.7 1289.0,582.9C1284.8,581.1 1280.3,577.1 1276.2,577.5C1272.1,577.9 1265.4,582.4 1264.4,585.3C1263.4,588.2 1268.2,592.9 1270.3,595.1C1272.4,597.3 1274.7,597.4 1277.0,598.5C1279.3,599.6 1281.4,600.4 1284.0,602.0C1286.6,603.6 1292.8,605.6 1292.8,607.9C1292.8,610.2 1287.6,615.4 1284.0,615.7C1280.4,616.0 1275.2,611.8 1271.0,609.8C1266.8,607.8 1262.7,603.8 1258.5,604.0C1254.3,604.2 1247.1,608.4 1245.8,610.8C1244.5,613.2 1248.7,616.8 1250.7,618.6C1252.7,620.4 1255.4,620.5 1258.0,621.5C1260.6,622.5 1263.8,623.0 1266.4,624.5C1269.0,626.0 1273.5,628.6 1273.8,630.4C1274.1,632.2 1271.4,635.5 1268.3,635.3C1265.2,635.1 1259.2,631.1 1255.0,629.0C1250.8,626.9 1246.7,624.4 1242.9,622.6C1239.1,620.8 1233.8,618.8 1232.0,618.0" stroke="#2f3b3b" stroke-width="7.8"/><path d="M1333.0,368.8C1332.9,372.3 1332.5,383.1 1332.2,390.0C1331.9,396.9 1331.7,403.7 1331.4,410.0C1331.1,416.3 1331.0,423.4 1330.6,428.0C1330.2,432.6 1330.6,436.0 1329.2,437.5C1327.8,439.0 1325.3,437.8 1322.0,437.0C1318.7,436.2 1312.6,432.4 1309.3,432.8C1306.0,433.2 1302.3,437.2 1302.1,439.3C1301.9,441.4 1304.9,443.6 1307.9,445.5C1310.9,447.4 1315.8,449.1 1320.0,450.9C1324.2,452.7 1329.8,454.3 1332.8,456.3C1335.8,458.3 1338.5,460.6 1338.3,462.7C1338.1,464.8 1334.5,468.8 1331.4,469.0C1328.4,469.2 1323.8,465.6 1320.0,463.9C1316.2,462.2 1312.0,458.7 1308.9,458.8C1305.8,458.9 1301.8,462.6 1301.5,464.7C1301.2,466.8 1304.1,469.2 1307.0,471.2C1309.9,473.2 1314.9,474.8 1319.0,476.7C1323.1,478.6 1328.4,480.4 1331.4,482.3C1334.5,484.2 1337.6,486.1 1337.3,488.2C1337.0,490.2 1332.7,494.4 1329.5,494.6C1326.3,494.8 1321.8,491.1 1318.0,489.4C1314.2,487.7 1310.0,484.2 1307.0,484.3C1304.0,484.4 1300.3,488.0 1300.1,490.1C1299.9,492.2 1303.0,494.9 1306.0,497.0C1309.0,499.1 1314.1,501.0 1318.0,503.0C1321.9,505.0 1326.7,506.8 1329.5,509.1C1332.3,511.4 1335.3,514.2 1334.8,516.6C1334.3,519.0 1329.8,523.2 1326.5,523.4C1323.2,523.5 1318.9,519.5 1315.0,517.5C1311.1,515.5 1306.5,511.4 1303.1,511.7C1299.7,512.0 1295.3,516.7 1294.8,519.5C1294.3,522.3 1297.6,526.2 1300.1,528.7C1302.6,531.2 1306.6,532.5 1310.0,534.5C1313.4,536.5 1318.0,538.3 1320.7,540.4C1323.4,542.5 1326.4,544.8 1326.1,546.9C1325.8,549.0 1322.0,553.0 1318.7,553.3C1315.4,553.6 1310.2,550.1 1306.0,548.6C1301.8,547.1 1297.5,543.1 1293.3,544.0C1289.1,544.9 1282.0,550.9 1281.1,554.0C1280.2,557.1 1285.4,560.6 1287.9,562.8C1290.4,565.0 1293.2,565.7 1296.0,567.2C1298.8,568.7 1302.0,569.6 1304.6,571.6C1307.2,573.6 1311.9,576.7 1311.4,579.5C1310.9,582.3 1305.3,587.7 1301.6,588.3C1297.9,588.9 1293.2,584.7 1289.0,582.9C1284.8,581.1 1280.3,577.1 1276.2,577.5C1272.1,577.9 1265.4,582.4 1264.4,585.3C1263.4,588.2 1268.2,592.9 1270.3,595.1C1272.4,597.3 1274.7,597.4 1277.0,598.5C1279.3,599.6 1281.4,600.4 1284.0,602.0C1286.6,603.6 1292.8,605.6 1292.8,607.9C1292.8,610.2 1287.6,615.4 1284.0,615.7C1280.4,616.0 1275.2,611.8 1271.0,609.8C1266.8,607.8 1262.7,603.8 1258.5,604.0C1254.3,604.2 1247.1,608.4 1245.8,610.8C1244.5,613.2 1248.7,616.8 1250.7,618.6C1252.7,620.4 1255.4,620.5 1258.0,621.5C1260.6,622.5 1263.8,623.0 1266.4,624.5C1269.0,626.0 1273.5,628.6 1273.8,630.4C1274.1,632.2 1271.4,635.5 1268.3,635.3C1265.2,635.1 1259.2,631.1 1255.0,629.0C1250.8,626.9 1246.7,624.4 1242.9,622.6C1239.1,620.8 1233.8,618.8 1232.0,618.0" stroke="url(#sg)" stroke-width="6.4"/><path d="M1333.0,368.8C1332.9,372.3 1332.5,383.1 1332.2,390.0C1331.9,396.9 1331.7,403.7 1331.4,410.0C1331.1,416.3 1331.0,423.4 1330.6,428.0C1330.2,432.6 1330.6,436.0 1329.2,437.5C1327.8,439.0 1325.3,437.8 1322.0,437.0C1318.7,436.2 1312.6,432.4 1309.3,432.8C1306.0,433.2 1302.3,437.2 1302.1,439.3C1301.9,441.4 1304.9,443.6 1307.9,445.5C1310.9,447.4 1315.8,449.1 1320.0,450.9C1324.2,452.7 1329.8,454.3 1332.8,456.3C1335.8,458.3 1338.5,460.6 1338.3,462.7C1338.1,464.8 1334.5,468.8 1331.4,469.0C1328.4,469.2 1323.8,465.6 1320.0,463.9C1316.2,462.2 1312.0,458.7 1308.9,458.8C1305.8,458.9 1301.8,462.6 1301.5,464.7C1301.2,466.8 1304.1,469.2 1307.0,471.2C1309.9,473.2 1314.9,474.8 1319.0,476.7C1323.1,478.6 1328.4,480.4 1331.4,482.3C1334.5,484.2 1337.6,486.1 1337.3,488.2C1337.0,490.2 1332.7,494.4 1329.5,494.6C1326.3,494.8 1321.8,491.1 1318.0,489.4C1314.2,487.7 1310.0,484.2 1307.0,484.3C1304.0,484.4 1300.3,488.0 1300.1,490.1C1299.9,492.2 1303.0,494.9 1306.0,497.0C1309.0,499.1 1314.1,501.0 1318.0,503.0C1321.9,505.0 1326.7,506.8 1329.5,509.1C1332.3,511.4 1335.3,514.2 1334.8,516.6C1334.3,519.0 1329.8,523.2 1326.5,523.4C1323.2,523.5 1318.9,519.5 1315.0,517.5C1311.1,515.5 1306.5,511.4 1303.1,511.7C1299.7,512.0 1295.3,516.7 1294.8,519.5C1294.3,522.3 1297.6,526.2 1300.1,528.7C1302.6,531.2 1306.6,532.5 1310.0,534.5C1313.4,536.5 1318.0,538.3 1320.7,540.4C1323.4,542.5 1326.4,544.8 1326.1,546.9C1325.8,549.0 1322.0,553.0 1318.7,553.3C1315.4,553.6 1310.2,550.1 1306.0,548.6C1301.8,547.1 1297.5,543.1 1293.3,544.0C1289.1,544.9 1282.0,550.9 1281.1,554.0C1280.2,557.1 1285.4,560.6 1287.9,562.8C1290.4,565.0 1293.2,565.7 1296.0,567.2C1298.8,568.7 1302.0,569.6 1304.6,571.6C1307.2,573.6 1311.9,576.7 1311.4,579.5C1310.9,582.3 1305.3,587.7 1301.6,588.3C1297.9,588.9 1293.2,584.7 1289.0,582.9C1284.8,581.1 1280.3,577.1 1276.2,577.5C1272.1,577.9 1265.4,582.4 1264.4,585.3C1263.4,588.2 1268.2,592.9 1270.3,595.1C1272.4,597.3 1274.7,597.4 1277.0,598.5C1279.3,599.6 1281.4,600.4 1284.0,602.0C1286.6,603.6 1292.8,605.6 1292.8,607.9C1292.8,610.2 1287.6,615.4 1284.0,615.7C1280.4,616.0 1275.2,611.8 1271.0,609.8C1266.8,607.8 1262.7,603.8 1258.5,604.0C1254.3,604.2 1247.1,608.4 1245.8,610.8C1244.5,613.2 1248.7,616.8 1250.7,618.6C1252.7,620.4 1255.4,620.5 1258.0,621.5C1260.6,622.5 1263.8,623.0 1266.4,624.5C1269.0,626.0 1273.5,628.6 1273.8,630.4C1274.1,632.2 1271.4,635.5 1268.3,635.3C1265.2,635.1 1259.2,631.1 1255.0,629.0C1250.8,626.9 1246.7,624.4 1242.9,622.6C1239.1,620.8 1233.8,618.8 1232.0,618.0" stroke="url(#tg)" stroke-width="4.8" transform="translate(-0.4,-0.6)"/><path d="M1333.0,368.8C1332.9,372.3 1332.5,383.1 1332.2,390.0C1331.9,396.9 1331.7,403.7 1331.4,410.0C1331.1,416.3 1331.0,423.4 1330.6,428.0C1330.2,432.6 1330.6,436.0 1329.2,437.5C1327.8,439.0 1325.3,437.8 1322.0,437.0C1318.7,436.2 1312.6,432.4 1309.3,432.8C1306.0,433.2 1302.3,437.2 1302.1,439.3C1301.9,441.4 1304.9,443.6 1307.9,445.5C1310.9,447.4 1315.8,449.1 1320.0,450.9C1324.2,452.7 1329.8,454.3 1332.8,456.3C1335.8,458.3 1338.5,460.6 1338.3,462.7C1338.1,464.8 1334.5,468.8 1331.4,469.0C1328.4,469.2 1323.8,465.6 1320.0,463.9C1316.2,462.2 1312.0,458.7 1308.9,458.8C1305.8,458.9 1301.8,462.6 1301.5,464.7C1301.2,466.8 1304.1,469.2 1307.0,471.2C1309.9,473.2 1314.9,474.8 1319.0,476.7C1323.1,478.6 1328.4,480.4 1331.4,482.3C1334.5,484.2 1337.6,486.1 1337.3,488.2C1337.0,490.2 1332.7,494.4 1329.5,494.6C1326.3,494.8 1321.8,491.1 1318.0,489.4C1314.2,487.7 1310.0,484.2 1307.0,484.3C1304.0,484.4 1300.3,488.0 1300.1,490.1C1299.9,492.2 1303.0,494.9 1306.0,497.0C1309.0,499.1 1314.1,501.0 1318.0,503.0C1321.9,505.0 1326.7,506.8 1329.5,509.1C1332.3,511.4 1335.3,514.2 1334.8,516.6C1334.3,519.0 1329.8,523.2 1326.5,523.4C1323.2,523.5 1318.9,519.5 1315.0,517.5C1311.1,515.5 1306.5,511.4 1303.1,511.7C1299.7,512.0 1295.3,516.7 1294.8,519.5C1294.3,522.3 1297.6,526.2 1300.1,528.7C1302.6,531.2 1306.6,532.5 1310.0,534.5C1313.4,536.5 1318.0,538.3 1320.7,540.4C1323.4,542.5 1326.4,544.8 1326.1,546.9C1325.8,549.0 1322.0,553.0 1318.7,553.3C1315.4,553.6 1310.2,550.1 1306.0,548.6C1301.8,547.1 1297.5,543.1 1293.3,544.0C1289.1,544.9 1282.0,550.9 1281.1,554.0C1280.2,557.1 1285.4,560.6 1287.9,562.8C1290.4,565.0 1293.2,565.7 1296.0,567.2C1298.8,568.7 1302.0,569.6 1304.6,571.6C1307.2,573.6 1311.9,576.7 1311.4,579.5C1310.9,582.3 1305.3,587.7 1301.6,588.3C1297.9,588.9 1293.2,584.7 1289.0,582.9C1284.8,581.1 1280.3,577.1 1276.2,577.5C1272.1,577.9 1265.4,582.4 1264.4,585.3C1263.4,588.2 1268.2,592.9 1270.3,595.1C1272.4,597.3 1274.7,597.4 1277.0,598.5C1279.3,599.6 1281.4,600.4 1284.0,602.0C1286.6,603.6 1292.8,605.6 1292.8,607.9C1292.8,610.2 1287.6,615.4 1284.0,615.7C1280.4,616.0 1275.2,611.8 1271.0,609.8C1266.8,607.8 1262.7,603.8 1258.5,604.0C1254.3,604.2 1247.1,608.4 1245.8,610.8C1244.5,613.2 1248.7,616.8 1250.7,618.6C1252.7,620.4 1255.4,620.5 1258.0,621.5C1260.6,622.5 1263.8,623.0 1266.4,624.5C1269.0,626.0 1273.5,628.6 1273.8,630.4C1274.1,632.2 1271.4,635.5 1268.3,635.3C1265.2,635.1 1259.2,631.1 1255.0,629.0C1250.8,626.9 1246.7,624.4 1242.9,622.6C1239.1,620.8 1233.8,618.8 1232.0,618.0" stroke="url(#yg)" stroke-width="2.8" transform="translate(-0.3,-0.5)"/><path d="M1333.0,368.8C1332.9,372.3 1332.5,383.1 1332.2,390.0C1331.9,396.9 1331.7,403.7 1331.4,410.0C1331.1,416.3 1331.0,423.4 1330.6,428.0C1330.2,432.6 1330.6,436.0 1329.2,437.5C1327.8,439.0 1325.3,437.8 1322.0,437.0C1318.7,436.2 1312.6,432.4 1309.3,432.8C1306.0,433.2 1302.3,437.2 1302.1,439.3C1301.9,441.4 1304.9,443.6 1307.9,445.5C1310.9,447.4 1315.8,449.1 1320.0,450.9C1324.2,452.7 1329.8,454.3 1332.8,456.3C1335.8,458.3 1338.5,460.6 1338.3,462.7C1338.1,464.8 1334.5,468.8 1331.4,469.0C1328.4,469.2 1323.8,465.6 1320.0,463.9C1316.2,462.2 1312.0,458.7 1308.9,458.8C1305.8,458.9 1301.8,462.6 1301.5,464.7C1301.2,466.8 1304.1,469.2 1307.0,471.2C1309.9,473.2 1314.9,474.8 1319.0,476.7C1323.1,478.6 1328.4,480.4 1331.4,482.3C1334.5,484.2 1337.6,486.1 1337.3,488.2C1337.0,490.2 1332.7,494.4 1329.5,494.6C1326.3,494.8 1321.8,491.1 1318.0,489.4C1314.2,487.7 1310.0,484.2 1307.0,484.3C1304.0,484.4 1300.3,488.0 1300.1,490.1C1299.9,492.2 1303.0,494.9 1306.0,497.0C1309.0,499.1 1314.1,501.0 1318.0,503.0C1321.9,505.0 1326.7,506.8 1329.5,509.1C1332.3,511.4 1335.3,514.2 1334.8,516.6C1334.3,519.0 1329.8,523.2 1326.5,523.4C1323.2,523.5 1318.9,519.5 1315.0,517.5C1311.1,515.5 1306.5,511.4 1303.1,511.7C1299.7,512.0 1295.3,516.7 1294.8,519.5C1294.3,522.3 1297.6,526.2 1300.1,528.7C1302.6,531.2 1306.6,532.5 1310.0,534.5C1313.4,536.5 1318.0,538.3 1320.7,540.4C1323.4,542.5 1326.4,544.8 1326.1,546.9C1325.8,549.0 1322.0,553.0 1318.7,553.3C1315.4,553.6 1310.2,550.1 1306.0,548.6C1301.8,547.1 1297.5,543.1 1293.3,544.0C1289.1,544.9 1282.0,550.9 1281.1,554.0C1280.2,557.1 1285.4,560.6 1287.9,562.8C1290.4,565.0 1293.2,565.7 1296.0,567.2C1298.8,568.7 1302.0,569.6 1304.6,571.6C1307.2,573.6 1311.9,576.7 1311.4,579.5C1310.9,582.3 1305.3,587.7 1301.6,588.3C1297.9,588.9 1293.2,584.7 1289.0,582.9C1284.8,581.1 1280.3,577.1 1276.2,577.5C1272.1,577.9 1265.4,582.4 1264.4,585.3C1263.4,588.2 1268.2,592.9 1270.3,595.1C1272.4,597.3 1274.7,597.4 1277.0,598.5C1279.3,599.6 1281.4,600.4 1284.0,602.0C1286.6,603.6 1292.8,605.6 1292.8,607.9C1292.8,610.2 1287.6,615.4 1284.0,615.7C1280.4,616.0 1275.2,611.8 1271.0,609.8C1266.8,607.8 1262.7,603.8 1258.5,604.0C1254.3,604.2 1247.1,608.4 1245.8,610.8C1244.5,613.2 1248.7,616.8 1250.7,618.6C1252.7,620.4 1255.4,620.5 1258.0,621.5C1260.6,622.5 1263.8,623.0 1266.4,624.5C1269.0,626.0 1273.5,628.6 1273.8,630.4C1274.1,632.2 1271.4,635.5 1268.3,635.3C1265.2,635.1 1259.2,631.1 1255.0,629.0C1250.8,626.9 1246.7,624.4 1242.9,622.6C1239.1,620.8 1233.8,618.8 1232.0,618.0" stroke="#ec6a20" stroke-width="1.2" transform="translate(-0.5,-0.9)" stroke-dasharray="20 10"/><path d="M1333.0,368.8C1332.9,372.3 1332.5,383.1 1332.2,390.0C1331.9,396.9 1331.7,403.7 1331.4,410.0C1331.1,416.3 1331.0,423.4 1330.6,428.0C1330.2,432.6 1330.6,436.0 1329.2,437.5C1327.8,439.0 1325.3,437.8 1322.0,437.0C1318.7,436.2 1312.6,432.4 1309.3,432.8C1306.0,433.2 1302.3,437.2 1302.1,439.3C1301.9,441.4 1304.9,443.6 1307.9,445.5C1310.9,447.4 1315.8,449.1 1320.0,450.9C1324.2,452.7 1329.8,454.3 1332.8,456.3C1335.8,458.3 1338.5,460.6 1338.3,462.7C1338.1,464.8 1334.5,468.8 1331.4,469.0C1328.4,469.2 1323.8,465.6 1320.0,463.9C1316.2,462.2 1312.0,458.7 1308.9,458.8C1305.8,458.9 1301.8,462.6 1301.5,464.7C1301.2,466.8 1304.1,469.2 1307.0,471.2C1309.9,473.2 1314.9,474.8 1319.0,476.7C1323.1,478.6 1328.4,480.4 1331.4,482.3C1334.5,484.2 1337.6,486.1 1337.3,488.2C1337.0,490.2 1332.7,494.4 1329.5,494.6C1326.3,494.8 1321.8,491.1 1318.0,489.4C1314.2,487.7 1310.0,484.2 1307.0,484.3C1304.0,484.4 1300.3,488.0 1300.1,490.1C1299.9,492.2 1303.0,494.9 1306.0,497.0C1309.0,499.1 1314.1,501.0 1318.0,503.0C1321.9,505.0 1326.7,506.8 1329.5,509.1C1332.3,511.4 1335.3,514.2 1334.8,516.6C1334.3,519.0 1329.8,523.2 1326.5,523.4C1323.2,523.5 1318.9,519.5 1315.0,517.5C1311.1,515.5 1306.5,511.4 1303.1,511.7C1299.7,512.0 1295.3,516.7 1294.8,519.5C1294.3,522.3 1297.6,526.2 1300.1,528.7C1302.6,531.2 1306.6,532.5 1310.0,534.5C1313.4,536.5 1318.0,538.3 1320.7,540.4C1323.4,542.5 1326.4,544.8 1326.1,546.9C1325.8,549.0 1322.0,553.0 1318.7,553.3C1315.4,553.6 1310.2,550.1 1306.0,548.6C1301.8,547.1 1297.5,543.1 1293.3,544.0C1289.1,544.9 1282.0,550.9 1281.1,554.0C1280.2,557.1 1285.4,560.6 1287.9,562.8C1290.4,565.0 1293.2,565.7 1296.0,567.2C1298.8,568.7 1302.0,569.6 1304.6,571.6C1307.2,573.6 1311.9,576.7 1311.4,579.5C1310.9,582.3 1305.3,587.7 1301.6,588.3C1297.9,588.9 1293.2,584.7 1289.0,582.9C1284.8,581.1 1280.3,577.1 1276.2,577.5C1272.1,577.9 1265.4,582.4 1264.4,585.3C1263.4,588.2 1268.2,592.9 1270.3,595.1C1272.4,597.3 1274.7,597.4 1277.0,598.5C1279.3,599.6 1281.4,600.4 1284.0,602.0C1286.6,603.6 1292.8,605.6 1292.8,607.9C1292.8,610.2 1287.6,615.4 1284.0,615.7C1280.4,616.0 1275.2,611.8 1271.0,609.8C1266.8,607.8 1262.7,603.8 1258.5,604.0C1254.3,604.2 1247.1,608.4 1245.8,610.8C1244.5,613.2 1248.7,616.8 1250.7,618.6C1252.7,620.4 1255.4,620.5 1258.0,621.5C1260.6,622.5 1263.8,623.0 1266.4,624.5C1269.0,626.0 1273.5,628.6 1273.8,630.4C1274.1,632.2 1271.4,635.5 1268.3,635.3C1265.2,635.1 1259.2,631.1 1255.0,629.0C1250.8,626.9 1246.7,624.4 1242.9,622.6C1239.1,620.8 1233.8,618.8 1232.0,618.0" stroke="#2f3b3b" stroke-width="0.5" opacity=".55" transform="translate(0.9,1.2)"/>
</g></svg>
<svg class="abs" style="left:1834px;top:262px" width="24" height="592" viewBox="1834 262 24 592"><rect x="1838" y="267.00" width="15" height="5.7" fill="#660068"/><path d="M1838.6 269.90h1.6M1850.8 269.90h1.6" stroke="#222" stroke-width="0.8" opacity=".7"/><rect x="1838" y="338.95" width="15" height="5.7" fill="#c0002c"/><path d="M1838.6 341.85h1.6M1850.8 341.85h1.6" stroke="#222" stroke-width="0.8" opacity=".7"/><rect x="1838" y="410.90" width="15" height="5.7" fill="#fb4a08"/><path d="M1838.6 413.80h1.6M1850.8 413.80h1.6" stroke="#222" stroke-width="0.8" opacity=".7"/><rect x="1838" y="482.85" width="15" height="5.7" fill="#f9d616"/><path d="M1838.6 485.75h1.6M1850.8 485.75h1.6" stroke="#222" stroke-width="0.8" opacity=".7"/><rect x="1838" y="554.80" width="15" height="5.7" fill="#62ea5c"/><path d="M1838.6 557.70h1.6M1850.8 557.70h1.6" stroke="#222" stroke-width="0.8" opacity=".7"/><rect x="1838" y="626.75" width="15" height="5.7" fill="#1fe0f2"/><path d="M1838.6 629.65h1.6M1850.8 629.65h1.6" stroke="#222" stroke-width="0.8" opacity=".7"/><rect x="1838" y="698.70" width="15" height="5.7" fill="#4f88f2"/><path d="M1838.6 701.60h1.6M1850.8 701.60h1.6" stroke="#222" stroke-width="0.8" opacity=".7"/><rect x="1838" y="770.65" width="15" height="5.7" fill="#a896f2"/><path d="M1838.6 773.55h1.6M1850.8 773.55h1.6" stroke="#222" stroke-width="0.8" opacity=".7"/><rect x="1838" y="842.60" width="15" height="5.7" fill="#e6e4f6"/><path d="M1838.6 845.50h1.6M1850.8 845.50h1.6" stroke="#222" stroke-width="0.8" opacity=".7"/><rect x="1838" y="267" width="15" height="581.4" fill="none" stroke="#787878" stroke-width="1.8"/><path d="M1837.1 266.6H1853.9" stroke="#33203a" stroke-width="1.2"/></svg>
<svg class="abs" style="left:1888px;top:198px" width="28" height="24" viewBox="1888 198 28 24"><path d="M1891 203.2L1908.6 200.4L1912.4 214.6L1901.2 219.6L1894 216.4Z" fill="#e7e7ea"/><defs><linearGradient id="pb" x1="0" y1="0" x2="1" y2="1"><stop offset="0" stop-color="#3f7fe6"/><stop offset="1" stop-color="#16309e"/></linearGradient></defs><rect x="1895.2" y="203.8" width="13.6" height="10.6" rx="2.6" fill="url(#pb)"/><path d="M1897.4 205.6L1905.2 209.2L1900.4 213.2H1897.4Z" fill="#f4e04a"/><path d="M1905.2 209.2L1907.4 208.2V211.4L1902.6 212.6Z" fill="#7db4ee" opacity=".7"/></svg>
<span class="t" style="left:633px;top:12.88px;font-family:'Liberation Sans', sans-serif;font-size:14.5px;font-weight:bold;color:#ffffff;transform:scaleX(0.9615);">comsol62_benchmark_CFD_only_10GB - comsol62_benchmark_CFD_only_10GB_Linux_x86-64.sh</span>
<span class="t" style="left:9px;top:45.28px;font-family:'Liberation Sans', sans-serif;font-size:14.5px;font-weight:normal;color:#c6c6c6;transform:scaleX(1.0053);">File</span>
<span class="t" style="left:25.4px;top:103.88px;font-family:'Liberation Sans', sans-serif;font-size:14.5px;font-weight:normal;color:#1a1a1a;transform:scaleX(1.0444);">Geometry</span>
<span class="t" style="left:115.4px;top:103.88px;font-family:'Liberation Sans', sans-serif;font-size:14.5px;font-weight:normal;color:#1a1a1a;transform:scaleX(0.9783);">Mesh</span>
<span class="t" style="left:174.4px;top:103.88px;font-family:'Liberation Sans', sans-serif;font-size:14.5px;font-weight:normal;color:#1a1a1a;transform:scaleX(1.0434);">Compute</span>
<span class="t" style="left:271.8px;top:71.68px;font-family:'Liberation Sans', sans-serif;font-size:14.5px;font-weight:normal;color:#1a1a1a;transform:scaleX(1.0329);">3D Plot Velocity</span>
<span class="t" style="left:271.8px;top:95.68px;font-family:'Liberation Sans', sans-serif;font-size:14.5px;font-weight:normal;color:#1a1a1a;transform:scaleX(0.9911);">3D Plot Reynolds Cell Number</span>
<span class="t" style="left:502px;top:71.68px;font-family:'Liberation Sans', sans-serif;font-size:14.5px;font-weight:normal;color:#1a1a1a;transform:scaleX(0.9816);">3D Plot Mesh Quality (Skewness)</span>
<span class="t" style="left:353.5px;top:137.88px;font-family:'Liberation Sans', sans-serif;font-size:14.5px;font-weight:normal;color:#1a1a1a;transform:scaleX(1.0338);">Main</span>
<span class="t" style="left:7.2px;top:924.88px;font-family:'Liberation Sans', sans-serif;font-size:14.5px;font-weight:normal;color:#1a1a1a;transform:scaleX(0.9857);">COMSOL Multiphysics 6.2.0.290</span>
<span class="t" style="left:7.2px;top:942.88px;font-family:'Liberation Sans', sans-serif;font-size:14.5px;font-weight:normal;color:#1a1a1a;transform:scaleX(1.0342);">Warning: Ignoring unknown application argument 'cs.runtimeexec'.</span>
<span class="t" style="left:7.2px;top:960.88px;font-family:'Liberation Sans', sans-serif;font-size:14.5px;font-weight:normal;color:#1a1a1a;transform:scaleX(1.0416);">Warning: Ignoring unknown application argument 'cs.runtimemode'.</span>
<span class="t" style="left:7.2px;top:978.88px;font-family:'Liberation Sans', sans-serif;font-size:14.5px;font-weight:normal;color:#1a1a1a;transform:scaleX(1.0097);">Warning: The number of sockets 2 exceeds the number of available physical</span>
<span class="t" style="left:516.5px;top:949.88px;font-family:'Liberation Sans', sans-serif;font-size:14.5px;font-weight:normal;color:#1a1a1a;transform:scaleX(0.9599);">Last Solve</span>
<span class="t" style="left:516.5px;top:967.88px;font-family:'Liberation Sans', sans-serif;font-size:14.5px;font-weight:normal;color:#1a1a1a;transform:scaleX(1.0079);">Time:</span>
<span class="t" style="left:622.5px;top:958.88px;font-family:'Liberation Sans', sans-serif;font-size:14.5px;font-weight:normal;color:#1a1a1a;transform:scaleX(0.9537);">27 min 26 s</span>
<span class="t" style="left:1132.3px;top:209.31px;font-family:'DejaVu Sans', 'Liberation Sans', sans-serif;font-size:14px;font-weight:normal;color:#000000;transform:scaleX(1.0013);letter-spacing:0.55px;">Isosurface: Velocity magnitude (m/s)</span>
<span class="t" style="left:1862.7px;top:261.44px;font-family:'DejaVu Sans', 'Liberation Sans', sans-serif;font-size:14.4px;font-weight:normal;color:#000000;transform:scaleX(1.0297);">2.62</span>
<span class="t" style="left:1862.7px;top:333.39px;font-family:'DejaVu Sans', 'Liberation Sans', sans-serif;font-size:14.4px;font-weight:normal;color:#000000;transform:scaleX(1.0297);">2.33</span>
<span class="t" style="left:1862.7px;top:405.34px;font-family:'DejaVu Sans', 'Liberation Sans', sans-serif;font-size:14.4px;font-weight:normal;color:#000000;transform:scaleX(1.0297);">2.04</span>
<span class="t" style="left:1862.7px;top:477.29px;font-family:'DejaVu Sans', 'Liberation Sans', sans-serif;font-size:14.4px;font-weight:normal;color:#000000;transform:scaleX(1.0297);">1.75</span>
<span class="t" style="left:1862.7px;top:549.24px;font-family:'DejaVu Sans', 'Liberation Sans', sans-serif;font-size:14.4px;font-weight:normal;color:#000000;transform:scaleX(1.0297);">1.46</span>
<span class="t" style="left:1862.7px;top:621.19px;font-family:'DejaVu Sans', 'Liberation Sans', sans-serif;font-size:14.4px;font-weight:normal;color:#000000;transform:scaleX(1.0297);">1.17</span>
<span class="t" style="left:1862.7px;top:693.14px;font-family:'DejaVu Sans', 'Liberation Sans', sans-serif;font-size:14.4px;font-weight:normal;color:#000000;transform:scaleX(1.0297);">0.88</span>
<span class="t" style="left:1862.7px;top:765.09px;font-family:'DejaVu Sans', 'Liberation Sans', sans-serif;font-size:14.4px;font-weight:normal;color:#000000;transform:scaleX(1.0297);">0.59</span>
<span class="t" style="left:1862.7px;top:837.04px;font-family:'DejaVu Sans', 'Liberation Sans', sans-serif;font-size:14.4px;font-weight:normal;color:#000000;transform:scaleX(1.0310);">0.3</span>
<span class="t" style="left:516.3px;top:483.13px;font-family:'Liberation Sans', sans-serif;font-size:9.8px;font-weight:normal;color:#1a1a1a;transform:scaleX(0.9431);">1m DoF k-ε Turbulent</span>
<span class="t" style="left:516.3px;top:495.13px;font-family:'Liberation Sans', sans-serif;font-size:9.8px;font-weight:normal;color:#1a1a1a;transform:scaleX(0.9264);">Flow problem,</span>
<span class="t" style="left:516.3px;top:507.13px;font-family:'Liberation Sans', sans-serif;font-size:9.8px;font-weight:normal;color:#1a1a1a;transform:scaleX(0.9452);">segregated algebraic</span>
<span class="t" style="left:516.3px;top:519.13px;font-family:'Liberation Sans', sans-serif;font-size:9.8px;font-weight:normal;color:#1a1a1a;transform:scaleX(0.9184);">multigrid GMRES solver</span>
<span class="t" style="left:516.3px;top:531.13px;font-family:'Liberation Sans', sans-serif;font-size:9.8px;font-weight:normal;color:#1a1a1a;transform:scaleX(0.9202);">Mesh: "Fine"</span>
<span class="t" style="left:516.3px;top:567.13px;font-family:'Liberation Sans', sans-serif;font-size:9.8px;font-weight:normal;color:#1a1a1a;transform:scaleX(0.9056);">Available BLAS</span>
<span class="t" style="left:516.3px;top:579.13px;font-family:'Liberation Sans', sans-serif;font-size:9.8px;font-weight:normal;color:#1a1a1a;transform:scaleX(0.9109);">------------------</span>
<span class="t" style="left:516.3px;top:591.13px;font-family:'Liberation Sans', sans-serif;font-size:9.8px;font-weight:normal;color:#1a1a1a;transform:scaleX(0.9338);">Windows_x86:</span>
<span class="t" style="left:516.3px;top:603.13px;font-family:'Liberation Sans', sans-serif;font-size:9.8px;font-weight:normal;color:#1a1a1a;transform:scaleX(0.8939);">OneAPI 2022.2.1.0</span>
<span class="t" style="left:516.3px;top:615.13px;font-family:'Liberation Sans', sans-serif;font-size:9.8px;font-weight:normal;color:#1a1a1a;transform:scaleX(0.8853);">AOCL 4.1.1</span>
<span class="t" style="left:516.3px;top:627.13px;font-family:'Liberation Sans', sans-serif;font-size:9.8px;font-weight:normal;color:#1a1a1a;transform:scaleX(0.9109);">------------------</span>
<span class="t" style="left:516.3px;top:639.13px;font-family:'Liberation Sans', sans-serif;font-size:9.8px;font-weight:normal;color:#1a1a1a;transform:scaleX(0.9601);">Linux_x86:</span>
<span class="t" style="left:516.3px;top:651.13px;font-family:'Liberation Sans', sans-serif;font-size:9.8px;font-weight:normal;color:#1a1a1a;transform:scaleX(0.8939);">OneAPI 2022.2.1.0</span>
<span class="t" style="left:516.3px;top:663.13px;font-family:'Liberation Sans', sans-serif;font-size:9.8px;font-weight:normal;color:#1a1a1a;transform:scaleX(0.8853);">AOCL 4.1.1</span>
<span class="t" style="left:516.3px;top:675.13px;font-family:'Liberation Sans', sans-serif;font-size:9.8px;font-weight:normal;color:#1a1a1a;transform:scaleX(0.9109);">------------------</span>
<span class="t" style="left:516.3px;top:687.13px;font-family:'Liberation Sans', sans-serif;font-size:9.8px;font-weight:normal;color:#1a1a1a;transform:scaleX(0.9328);">Linux_aarch64:</span>
<span class="t" style="left:516.3px;top:699.13px;font-family:'Liberation Sans', sans-serif;font-size:9.8px;font-weight:normal;color:#1a1a1a;transform:scaleX(0.9680);">Arm-Performance-</span>
<span class="t" style="left:516.3px;top:711.13px;font-family:'Liberation Sans', sans-serif;font-size:9.8px;font-weight:normal;color:#1a1a1a;transform:scaleX(0.9401);">Libraries_23.10</span>
<span class="t" style="left:516.3px;top:723.13px;font-family:'Liberation Sans', sans-serif;font-size:9.8px;font-weight:normal;color:#1a1a1a;transform:scaleX(0.8863);">OpenBLAS 0.3.25</span>
<span class="t" style="left:516.3px;top:735.13px;font-family:'Liberation Sans', sans-serif;font-size:9.8px;font-weight:normal;color:#1a1a1a;transform:scaleX(0.9109);">------------------</span>
<span class="t" style="left:516.3px;top:747.13px;font-family:'Liberation Sans', sans-serif;font-size:9.8px;font-weight:normal;color:#1a1a1a;transform:scaleX(0.9269);">OSX_arm64:</span>
<span class="t" style="left:516.3px;top:759.13px;font-family:'Liberation Sans', sans-serif;font-size:9.8px;font-weight:normal;color:#1a1a1a;transform:scaleX(0.9179);">Apple vecLib</span>
<span class="t" style="left:516.3px;top:771.13px;font-family:'Liberation Sans', sans-serif;font-size:9.8px;font-weight:normal;color:#1a1a1a;transform:scaleX(0.8863);">OpenBLAS 0.3.25</span>
<span class="t" style="left:516.3px;top:783.13px;font-family:'Liberation Sans', sans-serif;font-size:9.8px;font-weight:normal;color:#1a1a1a;transform:scaleX(0.9680);">Arm-Performance-</span>
<span class="t" style="left:516.3px;top:795.13px;font-family:'Liberation Sans', sans-serif;font-size:9.8px;font-weight:normal;color:#1a1a1a;transform:scaleX(0.9401);">Libraries_23.10</span>
<div class="abs" style="left:1px;top:993px;width:1921px;height:1px;background:#9c9c9c"></div><div class="abs" style="left:1px;top:994px;width:1920px;height:24px;background:#f9fafe"></div>
</div></body></html>
